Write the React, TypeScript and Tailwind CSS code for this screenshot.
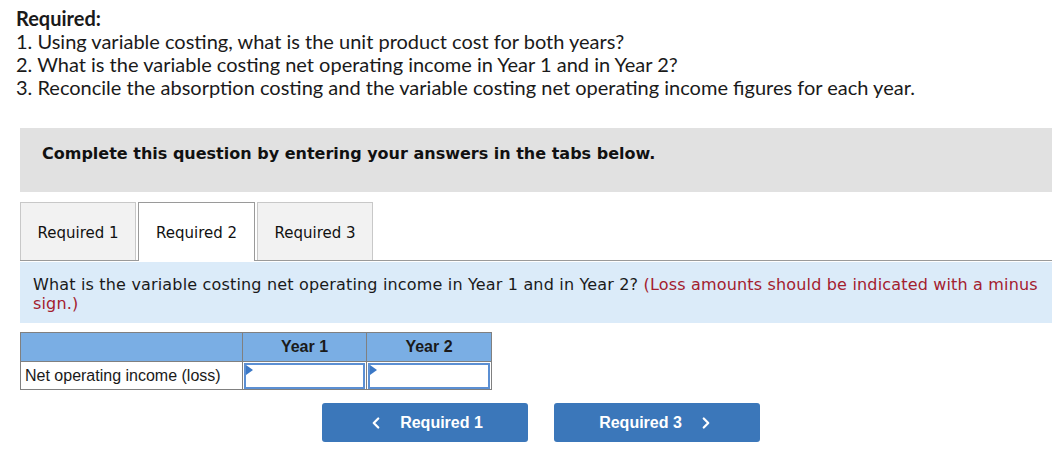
import { ChevronLeft, ChevronRight } from "lucide-react";

const tabs = ["Required 1", "Required 2", "Required 3"];

function AnswerCell() {
  return (
    <td className="border border-[#808080] p-0 h-[28px]">
      <div className="relative h-[26px] mx-px border-2 border-[#5b8fd3] bg-white">
        <span className="absolute left-0 top-0 w-0 h-0 border-t-[5px] border-b-[5px] border-l-[7px] border-t-transparent border-b-transparent border-l-[#3b78c6]" />
      </div>
    </td>
  );
}

export default function App() {
  return (
    <div className="w-[1052px] h-[452px] overflow-hidden bg-white text-[#1a1a1a]">
      <div className="pl-4 pt-[7px] font-['Lato',sans-serif] text-[20px] leading-[23px]">
        <p className="font-bold">Required:</p>
        <p>1. Using variable costing, what is the unit product cost for both years?</p>
        <p>2. What is the variable costing net operating income in Year 1 and in Year 2?</p>
        <p>3. Reconcile the absorption costing and the variable costing net operating income figures for each year.</p>
      </div>

      <div className="ml-5 mt-[29px] w-[1042px]">
        <div className="h-[64px] bg-[#e1e1e1] pl-[22px] pt-[16px] font-['DejaVu_Sans',Verdana,sans-serif] text-[16px] font-bold leading-5 text-[#111]">
          Complete this question by entering your answers in the tabs below.
        </div>

        <div className="mt-[10px] flex gap-[2px] border-b border-[#9a9a9a] font-['DejaVu_Sans',Verdana,sans-serif] text-[15px] text-[#111]">
          {tabs.map((t, i) =>
            i === 1 ? (
              <div
                key={t}
                className="-mb-px flex h-[59px] w-[117px] items-center justify-center border border-b-0 border-[#9a9a9a] bg-white pt-[3px]"
              >
                {t}
              </div>
            ) : (
              <div
                key={t}
                className="flex h-[58px] w-[116px] items-center justify-center border border-b-0 border-[#c8c8c8] bg-[#f2f2f2] pt-[3px]"
              >
                {t}
              </div>
            )
          )}
        </div>

        <div className="mt-px h-[61px] bg-[#dbebf9] pl-[13px] pr-2 pt-[13px] font-['DejaVu_Sans',Verdana,sans-serif] text-[16px] leading-[19px] tracking-[0.17px] text-[#1a1a1a]">
          What is the variable costing net operating income in Year 1 and in Year 2?{" "}
          <span className="text-[#a3202e]">(Loss amounts should be indicated with a minus sign.)</span>
        </div>

        <table className="mt-[9px] border-collapse font-['Liberation_Sans',Arial,sans-serif] text-[16px] text-[#1a1a1a]">
          <thead>
            <tr className="h-[29px] bg-[#7aaee4]">
              <th className="w-[222px] border border-[#808080]" />
              <th className="w-[124px] border border-[#808080] font-bold">Year 1</th>
              <th className="w-[125px] border border-[#808080] font-bold">Year 2</th>
            </tr>
          </thead>
          <tbody>
            <tr>
              <td className="border border-[#808080] px-[4px] leading-[26px]">Net operating income (loss)</td>
              <AnswerCell />
              <AnswerCell />
            </tr>
          </tbody>
        </table>

        <div className="mt-[13px] flex justify-center gap-[26px] font-['Liberation_Sans',Arial,sans-serif] text-[16px] font-bold text-white">
          <button className="flex h-[39px] w-[206px] items-center justify-center gap-[15px] rounded-[3px] bg-[#3b77ba]">
            <ChevronLeft size={18} strokeWidth={3} />
            <span>Required 1</span>
          </button>
          <button className="flex h-[39px] w-[206px] items-center justify-center gap-[15px] rounded-[3px] bg-[#3b77ba]">
            <span>Required 3</span>
            <ChevronRight size={18} strokeWidth={3} />
          </button>
        </div>
      </div>
    </div>
  );
}
